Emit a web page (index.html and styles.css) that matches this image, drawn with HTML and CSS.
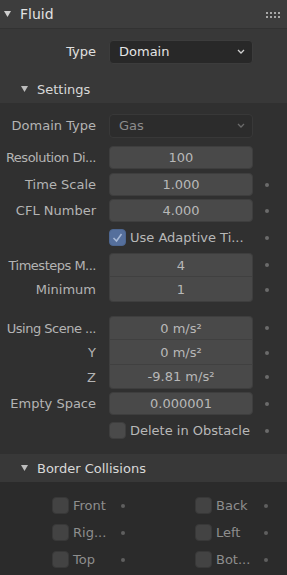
FILE: index.html
```html
<!DOCTYPE html>
<html lang="en">
<head>
    <meta charset="UTF-8">
    <meta name="viewport" content="width=device-width, initial-scale=1.0">
    <title>Fluid</title>
    <link rel="stylesheet" href="styles.css">
</head>
<body>
  <div class="panel">

    <div class="panel-head">
      <svg class="tri" width="7" height="6" viewBox="0 0 7 6"><polygon points="0,0 7,0 3.5,6" /></svg>
      <span class="title">Fluid</span>
      <svg class="grip" width="15" height="8" viewBox="0 0 15 8">
        <rect x="0" y="0" width="2" height="2"/><rect x="4" y="0" width="2" height="2"/><rect x="8" y="0" width="2" height="2"/><rect x="12" y="0" width="2" height="2"/>
        <rect x="0" y="4" width="2" height="2"/><rect x="4" y="4" width="2" height="2"/><rect x="8" y="4" width="2" height="2"/><rect x="12" y="4" width="2" height="2"/>
      </svg>
    </div>

    <div class="panel-body">
      <div class="row">
        <span class="label bright">Type</span>
        <div class="select">
          <span>Domain</span>
          <svg width="8" height="5" viewBox="0 0 8 5"><polyline points="1,1 4,4 7,1" /></svg>
        </div>
        <span class="dotcol"></span>
      </div>
    </div>

    <div class="sub-head">
      <svg class="tri" width="7" height="6" viewBox="0 0 7 6"><polygon points="0,0 7,0 3.5,6" /></svg>
      <span>Settings</span>
    </div>

    <div class="sub-body">
      <div class="row">
        <span class="label">Domain Type</span>
        <div class="select off">
          <span>Gas</span>
          <svg width="8" height="5" viewBox="0 0 8 5"><polyline points="1,1 4,4 7,1" /></svg>
        </div>
        <span class="dotcol"></span>
      </div>

      <div class="row mt9">
        <span class="label squeeze">Resolution Di...</span>
        <div class="field">100</div>
        <span class="dotcol"></span>
      </div>
      <div class="row mt4">
        <span class="label">Time Scale</span>
        <div class="field">1.000</div>
        <span class="dotcol"><i class="dot"></i></span>
      </div>
      <div class="row mt3">
        <span class="label">CFL Number</span>
        <div class="field">4.000</div>
        <span class="dotcol"><i class="dot"></i></span>
      </div>
      <div class="row mt4">
        <span class="label"></span>
        <div class="check-wrap">
          <span class="box on">
            <svg width="13" height="13" viewBox="0 0 13 13"><polyline points="2.5,7 5.5,10 10.5,3" /></svg>
          </span>
          <span class="check-text">Use Adaptive Ti...</span>
        </div>
        <span class="dotcol"><i class="dot"></i></span>
      </div>

      <div class="group mt4">
        <div class="row h24">
          <span class="label squeeze">Timesteps M...</span>
          <div class="field top">4</div>
          <span class="dotcol"><i class="dot"></i></span>
        </div>
        <div class="row h25">
          <span class="label">Minimum</span>
          <div class="field bottom">1</div>
          <span class="dotcol"><i class="dot"></i></span>
        </div>
      </div>

      <div class="group mt14">
        <div class="row h24">
          <span class="label squeeze">Using Scene ...</span>
          <div class="field top">0 m/s²</div>
          <span class="dotcol"><i class="dot"></i></span>
        </div>
        <div class="row h25">
          <span class="label">Y</span>
          <div class="field mid">0 m/s²</div>
          <span class="dotcol"><i class="dot"></i></span>
        </div>
        <div class="row h24">
          <span class="label">Z</span>
          <div class="field bottom">-9.81 m/s²</div>
          <span class="dotcol"><i class="dot"></i></span>
        </div>
      </div>

      <div class="row mt3">
        <span class="label">Empty Space</span>
        <div class="field">0.000001</div>
        <span class="dotcol"><i class="dot"></i></span>
      </div>
      <div class="row mt4">
        <span class="label"></span>
        <div class="check-wrap">
          <span class="box"></span>
          <span class="check-text">Delete in Obstacle</span>
        </div>
        <span class="dotcol"><i class="dot"></i></span>
      </div>
    </div>

    <div class="sub-head">
      <svg class="tri" width="7" height="6" viewBox="0 0 7 6"><polygon points="0,0 7,0 3.5,6" /></svg>
      <span>Border Collisions</span>
    </div>

    <div class="sub-body border-body">
      <div class="cells">
        <div class="cell"><span class="box"></span><span class="cell-text">Front</span><i class="dot"></i></div>
        <div class="cell"><span class="box"></span><span class="cell-text">Back</span><i class="dot"></i></div>
        <div class="cell"><span class="box"></span><span class="cell-text">Rig...</span><i class="dot"></i></div>
        <div class="cell"><span class="box"></span><span class="cell-text">Left</span><i class="dot"></i></div>
        <div class="cell"><span class="box"></span><span class="cell-text">Top</span><i class="dot"></i></div>
        <div class="cell"><span class="box"></span><span class="cell-text">Bot...</span><i class="dot"></i></div>
      </div>
    </div>

  </div>
</body>
</html>
```

FILE: styles.css
```css
body {
  margin: 0;
  background: #2b2b2b;
  font-family: "DejaVu Sans", sans-serif;
  font-size: 13px;
  color: #b8b8b8;
  overflow: hidden;
}

.panel {
  width: 287px;
  height: 575px;
  display: flex;
  flex-direction: column;
}

/* top header */
.panel-head {
  height: 28px;
  flex-shrink: 0;
  background: #3d3d3d;
  border-bottom: 1px solid #323232;
  display: flex;
  align-items: center;
  padding-left: 4px;
  color: #e2e2e2;
  font-size: 14px;
}
.panel-head .tri {
  fill: #cfcfcf;
  margin-right: 9px;
}
.panel-head .title {
  flex: 1;
}
.grip {
  fill: #a8a8a8;
  margin-right: 6px;
  margin-top: 3px;
}

.panel-body {
  background: #383838;
  padding-top: 11px;
  padding-bottom: 12px;
  flex-shrink: 0;
}

/* sub panel headers */
.sub-head {
  height: 28px;
  flex-shrink: 0;
  background: #383838;
  display: flex;
  align-items: center;
  padding-left: 21px;
  color: #d8d8d8;
}
.sub-head .tri {
  fill: #bdbdbd;
  margin-right: 9px;
}

.sub-body {
  background: #303030;
  padding-top: 11px;
  padding-bottom: 12px;
  flex-shrink: 0;
}
.border-body {
  background: #2b2b2b;
  padding-top: 12px;
  flex: 1;
}

/* rows */
.row {
  display: flex;
  align-items: center;
  height: 23px;
}
.row.h24 { height: 24px; }
.row.h25 { height: 25px; }
.mt3 { margin-top: 3px; }
.mt4 { margin-top: 4px; }
.mt9 { margin-top: 9px; }
.mt14 { margin-top: 14px; }

.label {
  width: 96px;
  flex-shrink: 0;
  text-align: right;
  white-space: nowrap;
  margin-right: 13px;
  color: #b4b4b4;
}
.label.squeeze {
  letter-spacing: -0.5px;
}
.label.bright {
  color: #e0e0e0;
}

.dotcol {
  width: 27px;
  display: flex;
  justify-content: center;
}
.dot {
  display: block;
  width: 4px;
  height: 4px;
  border-radius: 2px;
  background: #6b6b6b;
}

/* dropdowns */
.select {
  width: 144px;
  height: 24px;
  box-sizing: border-box;
  background: #282828;
  border: 1px solid #3c3c3c;
  border-radius: 4px;
  display: flex;
  align-items: center;
  justify-content: space-between;
  padding: 0 7px 0 9px;
  color: #e4e4e4;
}
.select svg {
  fill: none;
  stroke: #d0d0d0;
  stroke-width: 1.3;
}
.select.off {
  background: #2c2c2c;
  border-color: #383838;
  color: #8c8c8c;
}
.select.off svg {
  stroke: #6a6a6a;
}

/* number fields */
.field {
  width: 144px;
  height: 100%;
  box-sizing: border-box;
  background: #494949;
  border: 1px solid #3e3e3e;
  border-radius: 4px;
  display: flex;
  align-items: center;
  justify-content: center;
  color: #b8b8b8;
}
.field.top {
  border-radius: 4px 4px 0 0;
  border-bottom-color: #404040;
}
.field.mid {
  border-radius: 0;
  border-top: none;
  border-bottom-color: #404040;
}
.field.bottom {
  border-radius: 0 0 4px 4px;
  border-top: none;
}

/* checkboxes */
.check-wrap {
  width: 144px;
  display: flex;
  align-items: center;
}
.box {
  width: 17px;
  height: 17px;
  box-sizing: border-box;
  border-radius: 4px;
  background: #4a4a4a;
  border: 1px solid #3e3e3e;
  flex-shrink: 0;
  display: flex;
  align-items: center;
  justify-content: center;
}
.box.on {
  background: #556f9c;
  border-color: #4d6690;
}
.box.on svg {
  fill: none;
  stroke: #a8b9d6;
  stroke-width: 1.5;
}
.check-text {
  margin-left: 4px;
  white-space: nowrap;
  color: #b8b8b8;
}

/* border collisions grid */
.cells {
  display: grid;
  grid-template-columns: 75px 75px;
  column-gap: 68px;
  row-gap: 4px;
  padding-left: 52px;
}
.cell {
  height: 23px;
  display: flex;
  align-items: center;
}
.cell .box {
  background: #434343;
  border-color: #383838;
}
.cell-text {
  margin-left: 4px;
  width: 45px;
  color: #8e8e8e;
  white-space: nowrap;
}
.cell .dot {
  margin-left: 3px;
  background: #5f5f5f;
}
```
